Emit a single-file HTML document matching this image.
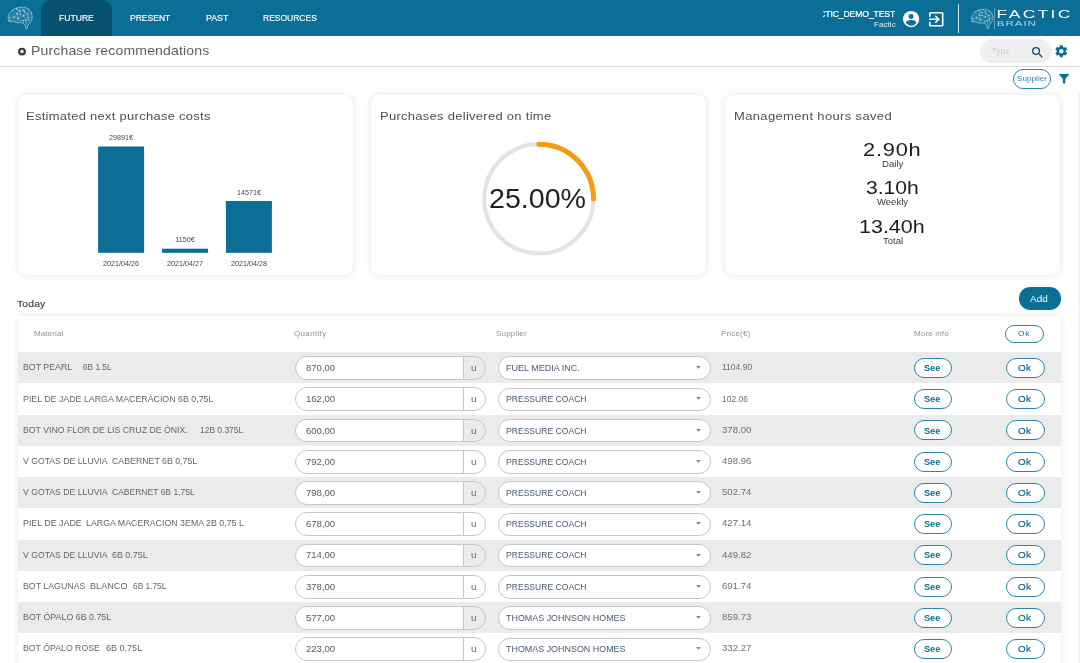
<!DOCTYPE html>
<html lang="en">
<head>
<meta charset="utf-8">
<title>Purchase recommendations</title>
<style>
*{box-sizing:border-box;margin:0;padding:0}
html,body{width:1080px;height:663px;overflow:hidden;background:#fff;font-family:"Liberation Sans",sans-serif}
#app{position:relative;width:1080px;height:663px;overflow:hidden;background:#fff;will-change:transform}
.abs{position:absolute}
.t{position:absolute;white-space:pre;transform-origin:0 50%;display:block}
#nav{position:absolute;left:0;top:0;width:1080px;height:36px;background:#0a6e96}
#tab{position:absolute;left:41px;top:0;width:71px;height:36px;background:#065070;border-radius:10px 10px 0 0}
#vdiv{position:absolute;left:957.7px;top:4px;width:1.2px;height:28.5px;background:rgba(255,255,255,.8)}
#titlebar{position:absolute;left:0;top:36px;width:1080px;height:31px;background:#fff;border-bottom:1.4px solid #dcdcdc}
#search{position:absolute;left:980px;top:39.2px;width:71.5px;height:23.8px;border-radius:12px;background:#eeeff0}
#ph{position:absolute;left:991.4px;top:45.4px;width:17.3px;height:12px;overflow:hidden;font-size:8.6px;letter-spacing:.2px;line-height:12px;color:#cfcfcf;white-space:pre}
#pill{position:absolute;left:1012.7px;top:69.4px;width:38.6px;height:19.6px;border-radius:10px;border:1.1px solid #2c84a8;background:#fff}
.card{position:absolute;top:95.3px;height:179.7px;width:335.4px;background:#fff;border-radius:8.5px;box-shadow:0 0 6px rgba(50,55,90,.14)}
#tbl{position:absolute;left:17.9px;top:315.8px;width:1043.2px;height:360px;background:#fff;box-shadow:0 0 6px rgba(60,60,80,.13)}
.row{position:absolute;left:17.9px;width:1043.2px;height:31.24px}
.inp{position:absolute;left:277.2px;top:4px;width:190.7px;height:23.7px;border:1px solid #c6c6c6;border-radius:12px;background:transparent;overflow:hidden}
.inp i{position:absolute;left:-1px;top:-1px;width:169.4px;height:23.7px;background:#fff;border:1px solid #c6c6c6;border-radius:12px 0 0 12px;display:block}
.sel{position:absolute;left:480.1px;top:4.2px;width:213.2px;height:23.5px;border:1px solid #c6c6c6;border-radius:12px;background:#fff}
.sel svg{left:197px;top:8.7px}
.btn{position:absolute;top:5.8px;height:20px;width:38.8px;border:1.1px solid #2c84a8;border-radius:10px;background:#fff}
.see{left:895.7px}.ok{left:987.9px}
#hok{position:absolute;left:1004.9px;top:325.1px;width:38.9px;height:17.9px;border:1.1px solid #2c84a8;border-radius:9px;background:#fff}
#add{position:absolute;left:1019.4px;top:287.2px;width:41.7px;height:22.6px;border-radius:11.3px;background:#0a6e96}
#acct{position:absolute;left:823px;top:7px;width:72px;height:14px;overflow:hidden;direction:rtl}
#rband{position:absolute;left:1077.6px;top:92px;width:2.4px;height:571px;background:#f1f2f4}
svg{position:absolute;overflow:visible}
.fl{font-family:"Liberation Sans",sans-serif}
</style>
</head>
<body>
<div id="app">
 <!-- tables & cards first (under) -->
 <div class="card" style="left:18px"></div>
 <div class="card" style="left:371px"></div>
 <div class="card" style="left:724.7px"></div>
 <div id="tbl"></div>
<div class="row" style="top:352.20px;background:#ebebeb"><div class="inp"><i></i></div><div class="sel"><svg width="4.9" height="2.7" viewBox="0 0 6 3.4"><path d="M0.5 0 H5.5 Q6.2 0 5.7 0.6 L3.4 3.1 Q3 3.5 2.6 3.1 L0.3 0.6 Q-0.2 0 0.5 0 Z" fill="#8a8a8a"/></svg></div><div class="btn see"></div><div class="btn ok"></div></div>
<div class="row" style="top:383.44px;background:#fff"><div class="inp"><i></i></div><div class="sel"><svg width="4.9" height="2.7" viewBox="0 0 6 3.4"><path d="M0.5 0 H5.5 Q6.2 0 5.7 0.6 L3.4 3.1 Q3 3.5 2.6 3.1 L0.3 0.6 Q-0.2 0 0.5 0 Z" fill="#8a8a8a"/></svg></div><div class="btn see"></div><div class="btn ok"></div></div>
<div class="row" style="top:414.68px;background:#ebebeb"><div class="inp"><i></i></div><div class="sel"><svg width="4.9" height="2.7" viewBox="0 0 6 3.4"><path d="M0.5 0 H5.5 Q6.2 0 5.7 0.6 L3.4 3.1 Q3 3.5 2.6 3.1 L0.3 0.6 Q-0.2 0 0.5 0 Z" fill="#8a8a8a"/></svg></div><div class="btn see"></div><div class="btn ok"></div></div>
<div class="row" style="top:445.92px;background:#fff"><div class="inp"><i></i></div><div class="sel"><svg width="4.9" height="2.7" viewBox="0 0 6 3.4"><path d="M0.5 0 H5.5 Q6.2 0 5.7 0.6 L3.4 3.1 Q3 3.5 2.6 3.1 L0.3 0.6 Q-0.2 0 0.5 0 Z" fill="#8a8a8a"/></svg></div><div class="btn see"></div><div class="btn ok"></div></div>
<div class="row" style="top:477.16px;background:#ebebeb"><div class="inp"><i></i></div><div class="sel"><svg width="4.9" height="2.7" viewBox="0 0 6 3.4"><path d="M0.5 0 H5.5 Q6.2 0 5.7 0.6 L3.4 3.1 Q3 3.5 2.6 3.1 L0.3 0.6 Q-0.2 0 0.5 0 Z" fill="#8a8a8a"/></svg></div><div class="btn see"></div><div class="btn ok"></div></div>
<div class="row" style="top:508.40px;background:#fff"><div class="inp"><i></i></div><div class="sel"><svg width="4.9" height="2.7" viewBox="0 0 6 3.4"><path d="M0.5 0 H5.5 Q6.2 0 5.7 0.6 L3.4 3.1 Q3 3.5 2.6 3.1 L0.3 0.6 Q-0.2 0 0.5 0 Z" fill="#8a8a8a"/></svg></div><div class="btn see"></div><div class="btn ok"></div></div>
<div class="row" style="top:539.64px;background:#ebebeb"><div class="inp"><i></i></div><div class="sel"><svg width="4.9" height="2.7" viewBox="0 0 6 3.4"><path d="M0.5 0 H5.5 Q6.2 0 5.7 0.6 L3.4 3.1 Q3 3.5 2.6 3.1 L0.3 0.6 Q-0.2 0 0.5 0 Z" fill="#8a8a8a"/></svg></div><div class="btn see"></div><div class="btn ok"></div></div>
<div class="row" style="top:570.88px;background:#fff"><div class="inp"><i></i></div><div class="sel"><svg width="4.9" height="2.7" viewBox="0 0 6 3.4"><path d="M0.5 0 H5.5 Q6.2 0 5.7 0.6 L3.4 3.1 Q3 3.5 2.6 3.1 L0.3 0.6 Q-0.2 0 0.5 0 Z" fill="#8a8a8a"/></svg></div><div class="btn see"></div><div class="btn ok"></div></div>
<div class="row" style="top:602.12px;background:#ebebeb"><div class="inp"><i></i></div><div class="sel"><svg width="4.9" height="2.7" viewBox="0 0 6 3.4"><path d="M0.5 0 H5.5 Q6.2 0 5.7 0.6 L3.4 3.1 Q3 3.5 2.6 3.1 L0.3 0.6 Q-0.2 0 0.5 0 Z" fill="#8a8a8a"/></svg></div><div class="btn see"></div><div class="btn ok"></div></div>
<div class="row" style="top:633.36px;background:#fff"><div class="inp"><i></i></div><div class="sel"><svg width="4.9" height="2.7" viewBox="0 0 6 3.4"><path d="M0.5 0 H5.5 Q6.2 0 5.7 0.6 L3.4 3.1 Q3 3.5 2.6 3.1 L0.3 0.6 Q-0.2 0 0.5 0 Z" fill="#8a8a8a"/></svg></div><div class="btn see"></div><div class="btn ok"></div></div>
 <div id="rband"></div>

 <div id="nav"></div>
 <div id="tab"></div>
 <div id="vdiv"></div>
 <div id="titlebar"></div>
 <svg style="left:17px;top:46px" width="10" height="11" viewBox="17 46 10 11"><circle cx="22" cy="51.6" r="2.85" fill="none" stroke="#3a3a3a" stroke-width="2.2"/></svg>
 <div id="search"></div>
 <div id="ph">Type...</div>
 <div id="pill"></div>
 <div id="hok"></div>
 <div id="add"></div>

 <!-- brain icon left -->
 <svg id="brainL" style="left:8px;top:6.8px" width="24.4" height="22.2" viewBox="0 0 24.4 22.2">
  <g id="brain" fill="none" stroke-linejoin="round" stroke-linecap="round">
   <path d="M0.6 13.8 L0.15 9.65 L1.35 6.3 L4.25 3.1 L8.1 1 L12.45 0.2 L17.3 0.35 L21.1 2.4 L23.55 5.8 L24.2 9.65 L23.55 13.5 L21.6 16.4 L19.7 18.3 L19.5 21.6 L18 22 L17.5 18.8 L15.35 16.4 L12.9 15.4 L9.6 15.9 L6.7 15 L3.8 14.5 Z" stroke="rgba(200,232,243,.58)" stroke-width=".9" fill="rgba(200,232,243,.10)"/>
   <path d="M1.35 6.3 L6.4 9.7 L4.25 3.1 L8.8 1.9 L9.3 6.8 M8.8 1.9 L12.45 0.2 L11.5 3.9 M12.45 0.2 L15.8 2.9 L17.3 0.35 M15.8 2.9 L21.1 2.4 M16.8 4.8 L15.6 8.9 L17.8 13 M12.4 7.2 L10 11.6 L6.7 15 M10 11.6 L12.9 15.4 L15.1 13.8 M6.4 9.7 L3.8 14.5 M1.8 13.5 L3.8 14.5 M0.15 9.65 L1.8 10.6 M23.55 13.5 L20.6 13 L21.6 16.4 M18.6 16.6 L19.7 18.3 M17.8 13 L17.5 18.8 M19.7 7.5 L17.8 13 M9.3 6.8 L10 11.6" stroke="rgba(200,232,243,.26)" stroke-width=".6"/>
   <path d="M8.8 1.9 L11.5 3.9 L15.8 2.9 L16.8 4.8 L11.5 3.9 L9.3 6.8 L6.4 9.7 L10 11.6 L15.6 8.9 L19.7 7.5 L20.4 10.6 L17.8 13 L15.1 13.8 L10 11.6 L9.3 6.8 L12.4 7.2 L15.6 8.9 L16.8 4.8 L19.7 7.5 M1.8 10.6 L6.4 9.7 L1.8 13.5 M4.25 3.1 L9.3 6.8 M20.4 10.6 L20.6 13 L17.8 13 L18.6 16.6 M12.4 7.2 L11.5 3.9 M6.4 9.7 L6.7 15 M10 11.6 L9.6 15.9 M15.1 13.8 L15.35 16.4 M21.1 2.4 L19.7 7.5 L23.55 5.8 M20.4 10.6 L24.2 9.65" stroke="rgba(200,232,243,.33)" stroke-width=".7"/>
   <g fill="rgba(225,244,250,.62)" stroke="none">
    <circle cx="8.8" cy="1.9" r=".8"/><circle cx="11.5" cy="3.9" r=".8"/><circle cx="15.8" cy="2.9" r=".7"/><circle cx="16.8" cy="4.8" r=".7"/>
    <circle cx="9.3" cy="6.8" r=".9"/><circle cx="6.4" cy="9.7" r=".8"/><circle cx="10" cy="11.6" r=".8"/><circle cx="15.6" cy="8.9" r=".9"/>
    <circle cx="19.7" cy="7.5" r=".8"/><circle cx="20.4" cy="10.6" r=".8"/><circle cx="17.8" cy="13" r=".7"/><circle cx="15.1" cy="13.8" r=".7"/>
    <circle cx="1.8" cy="10.6" r=".8"/><circle cx="1.8" cy="13.5" r=".8"/><circle cx="12.4" cy="7.2" r=".7"/><circle cx="20.6" cy="13" r=".6"/>
   </g>
  </g>
 </svg>
 <!-- brain icon right (logo) -->
 <svg style="left:970.5px;top:9px" width="22.2" height="20" viewBox="0 0 24.4 22.2"><use href="#brain"/></svg>
 <div class="abs" style="left:994px;top:7.8px;width:.8px;height:21px;background:rgba(255,255,255,.35)"></div>
 <!-- logo words -->
 <svg style="left:997px;top:8px" width="76" height="22" viewBox="0 0 76 22">
  <text class="fl" transform="translate(-0.4 10.05) scale(1.68 1)" font-size="10.4" fill="#fff" letter-spacing="1.4">FACTIC</text>
  <text class="fl" transform="translate(-0.2 18.2) scale(1.6 1)" font-size="7.3" fill="#a9d6e6" letter-spacing=".55">BRAIN</text>
 </svg>

 <!-- account text (clipped on the left like the original) -->
 <div id="acct"><span id="acctt" style="position:absolute;right:0;top:0;white-space:pre;font-size:8.7px;line-height:14px;color:#fff;direction:ltr;-webkit-text-stroke:.2px #fff;letter-spacing:-.16px;margin-right:-.16px">FACTIC_DEMO_TEST</span></div>

 <!-- account icon -->
 <svg style="left:902.8px;top:10.75px" width="16.2" height="16.2" viewBox="0 0 24 24">
  <circle cx="12" cy="12" r="12" fill="#fff"/>
  <circle cx="12" cy="8.2" r="3.7" fill="#0a6e96"/>
  <path d="M4.2 17.4 C5.6 14.4 8.6 13.5 12 13.5 C15.4 13.5 18.4 14.4 19.8 17.4 C18 20.3 15.2 21.8 12 21.8 C8.8 21.8 6 20.3 4.2 17.6 Z" fill="#0a6e96"/>
 </svg>
 <!-- exit icon -->
 <svg style="left:928.7px;top:11.6px" width="14.5" height="14.5" viewBox="0 0 18 18" fill="#fff">
  <path d="M7.09 12.59 L8.5 14 L13.5 9 L8.5 4 L7.09 5.41 L9.67 8 H0 v2 h9.67 Z M16 0 H2 C0.89 0 0 0.9 0 2 v4 h2 V2 h14 v14 H2 v-4 H0 v4 c0 1.1 0.89 2 2 2 h14 c1.1 0 2 -0.9 2 -2 V2 c0 -1.1 -0.9 -2 -2 -2 Z"/>
 </svg>
 <!-- search icon -->
 <svg style="left:1032.1px;top:46.5px" width="11.2" height="11.2" viewBox="3 3 18 18" fill="#0c4d66">
  <path d="M15.5 14h-.79l-.28-.27A6.471 6.471 0 0 0 16 9.5 6.5 6.5 0 1 0 9.500 16c1.610 0 3.090-.59 4.230-1.570l.27.28v.79l5 4.990L20.490 19l-4.990-5zm-6 0C7.010 14 5 11.990 5 9.500S7.010 5 9.500 5 14 7.010 14 9.500 11.990 14 9.500 14z"/>
 </svg>
 <!-- gear icon -->
 <svg style="left:1055.2px;top:45.3px" width="12.6" height="12.6" viewBox="2 2 20 20" fill="#0a6e96">
  <path d="M19.14 12.94c.04-.3.06-.61.06-.94 0-.32-.02-.64-.07-.94l2.030-1.580a.49.49 0 0 0 .12-.61l-1.920-3.320a.488.488 0 0 0-.59-.22l-2.390.96c-.5-.38-1.030-.7-1.620-.94l-.36-2.540a.484.484 0 0 0-.48-.41h-3.840c-.24 0-.43.17-.47.41l-.36 2.540c-.59.24-1.130.57-1.620.94l-2.390-.96c-.22-.08-.47 0-.59.22L2.740 8.870c-.12.21-.08.47.12.61l2.030 1.580c-.05.3-.09.63-.09.94s.02.640.07.940l-2.030 1.580a.49.49 0 0 0-.12.610l1.920 3.320c.12.220.37.290.59.220l2.390-.96c.5.380 1.030.7 1.620.94l.36 2.540c.05.240.240.410.480.410h3.840c.24 0 .44-.17.470-.410l.36-2.540c.59-.24 1.130-.56 1.620-.94l2.390.96c.22.080.47 0 .59-.22l1.920-3.320c.12-.22.070-.47-.12-.61l-2.010-1.580zM12 15.600c-1.980 0-3.600-1.620-3.600-3.600s1.620-3.600 3.600-3.600 3.600 1.620 3.600 3.600-1.620 3.600-3.600 3.600z"/>
 </svg>
 <!-- filter icon -->
 <svg style="left:1059px;top:74.4px" width="10.2" height="9.6" viewBox="0 0 10.2 9.6" fill="#0a6e96">
  <path d="M0.3 0 H9.9 C10.2 0 10.3 0.3 10.1 0.5 L6.3 4.9 V9 C6.3 9.4 6 9.6 5.7 9.6 H4.5 C4.2 9.6 3.9 9.4 3.9 9 V4.9 L0.1 0.5 C-0.1 0.3 0 0 0.3 0 Z"/>
 </svg>

 <!-- bar chart -->
 <svg style="left:0;top:0" width="360" height="280" viewBox="0 0 360 280">
  <rect x="98.1" y="146.5" width="46" height="106.3" fill="#0a6e96"/>
  <rect x="162" y="248.7" width="46" height="4.1" fill="#0a6e96"/>
  <rect x="225.9" y="201" width="46" height="51.8" fill="#0a6e96"/>
  <g class="fl" font-size="7.2" fill="#484848" text-anchor="middle">
   <text x="121.1" y="139.7">29891€</text>
   <text x="185" y="242.1">1150€</text>
   <text x="249" y="194.6">14571€</text>
   <text x="121.1" y="265.5">2021/04/26</text>
   <text x="185" y="265.5">2021/04/27</text>
   <text x="249" y="265.5">2021/04/28</text>
  </g>
 </svg>
 <!-- donut -->
 <svg style="left:478px;top:138px" width="122" height="122" viewBox="478 138 122 122">
  <circle cx="538.9" cy="198.8" r="54.6" fill="none" stroke="#e3e3e3" stroke-width="4.2"/>
  <path d="M538.9 144.2 A54.6 54.6 0 0 1 593.5 198.8" fill="none" stroke="#f89a0f" stroke-width="5" stroke-linecap="round"/>
 </svg>

<span class="t" style="left:59.17px;top:11.54px;font-size:8.8px;line-height:12.32px;color:#fff;letter-spacing:0.000px;transform:scaleX(0.9764);-webkit-text-stroke:0.15px #fff;">FUTURE</span>
<span class="t" style="left:130.17px;top:11.54px;font-size:8.8px;line-height:12.32px;color:#fff;letter-spacing:0.000px;transform:scaleX(0.9707);-webkit-text-stroke:0.15px #fff;">PRESENT</span>
<span class="t" style="left:205.97px;top:11.54px;font-size:8.8px;line-height:12.32px;color:#fff;letter-spacing:0.000px;transform:scaleX(1.0007);-webkit-text-stroke:0.15px #fff;">PAST</span>
<span class="t" style="left:263.47px;top:11.54px;font-size:8.8px;line-height:12.32px;color:#fff;letter-spacing:0.000px;transform:scaleX(0.9661);-webkit-text-stroke:0.15px #fff;">RESOURCES</span>
<span class="t" style="left:873.56px;top:19.71px;font-size:7.4px;line-height:10.36px;color:rgba(255,255,255,.9);letter-spacing:0.004px;transform:scaleX(1.1000);">Factic</span>
<span class="t" style="left:31.23px;top:41.99px;font-size:12.8px;line-height:17.92px;color:#5e5e5e;letter-spacing:0.117px;transform:scaleX(1.1000);">Purchase recommendations</span>
<span class="t" style="left:1017.04px;top:74.07px;font-size:7.6px;line-height:10.64px;color:#2f86aa;letter-spacing:0.000px;transform:scaleX(1.0773);">Supplier</span>
<span class="t" style="left:26.09px;top:107.78px;font-size:11.8px;line-height:16.52px;color:#505050;letter-spacing:0.250px;transform:scaleX(1.1000);">Estimated next purchase costs</span>
<span class="t" style="left:379.99px;top:107.78px;font-size:11.8px;line-height:16.52px;color:#505050;letter-spacing:0.258px;transform:scaleX(1.1000);">Purchases delivered on time</span>
<span class="t" style="left:733.79px;top:107.78px;font-size:11.8px;line-height:16.52px;color:#505050;letter-spacing:0.328px;transform:scaleX(1.1000);">Management hours saved</span>
<span class="t" style="left:488.98px;top:180.51px;font-size:27px;line-height:37.8px;color:#222;letter-spacing:-0.000px;transform:scaleX(1.0591);">25.00%</span>
<span class="t" style="left:863.16px;top:137.77px;font-size:18.2px;line-height:25.48px;color:#1c1c1c;letter-spacing:0.652px;transform:scaleX(1.2000);">2.90h</span>
<span class="t" style="left:865.66px;top:176.37px;font-size:18.2px;line-height:25.48px;color:#1c1c1c;letter-spacing:0.000px;transform:scaleX(1.1589);">3.10h</span>
<span class="t" style="left:859.16px;top:215.07px;font-size:18.2px;line-height:25.48px;color:#1c1c1c;letter-spacing:0.000px;transform:scaleX(1.1816);">13.40h</span>
<span class="t" style="left:881.96px;top:157.90px;font-size:9px;line-height:12.6px;color:#3a3a3a;letter-spacing:0.000px;transform:scaleX(1.0674);">Daily</span>
<span class="t" style="left:877.06px;top:196.20px;font-size:9px;line-height:12.6px;color:#3a3a3a;letter-spacing:0.000px;transform:scaleX(1.0586);">Weekly</span>
<span class="t" style="left:882.76px;top:235.40px;font-size:9px;line-height:12.6px;color:#3a3a3a;letter-spacing:0.000px;transform:scaleX(1.0551);">Total</span>
<span class="t" style="left:16.93px;top:297.06px;font-size:9.5px;line-height:13.3px;color:#3a3a3a;letter-spacing:0.095px;transform:scaleX(1.1000);-webkit-text-stroke:0.1px #3a3a3a;">Today</span>
<span class="t" style="left:1030.46px;top:293.10px;font-size:9px;line-height:12.6px;color:#fff;letter-spacing:0.112px;transform:scaleX(1.1000);">Add</span>
<span class="t" style="left:33.96px;top:328.67px;font-size:7.3px;line-height:10.22px;color:#939393;letter-spacing:0.098px;transform:scaleX(1.1000);">Material</span>
<span class="t" style="left:294.06px;top:328.67px;font-size:7.3px;line-height:10.22px;color:#939393;letter-spacing:0.298px;transform:scaleX(1.1000);">Quantity</span>
<span class="t" style="left:496.06px;top:328.67px;font-size:7.3px;line-height:10.22px;color:#939393;letter-spacing:0.161px;transform:scaleX(1.1000);">Supplier</span>
<span class="t" style="left:721.06px;top:328.67px;font-size:7.3px;line-height:10.22px;color:#939393;letter-spacing:0.143px;transform:scaleX(1.1000);">Price(€)</span>
<span class="t" style="left:914.36px;top:328.67px;font-size:7.3px;line-height:10.22px;color:#939393;letter-spacing:0.141px;transform:scaleX(1.1000);">More info</span>
<span class="t" style="left:1018.44px;top:328.67px;font-size:7.6px;line-height:10.64px;color:#0a6e96;letter-spacing:0.763px;transform:scaleX(1.1000);">Ok</span>
<span class="t" style="left:23.16px;top:361.35px;font-size:9px;line-height:12.6px;color:#666;letter-spacing:0.000px;transform:scaleX(0.9763);">BOT PEARL</span>
<span class="t" style="left:82.76px;top:361.35px;font-size:9px;line-height:12.6px;color:#666;letter-spacing:0.000px;transform:scaleX(0.9205);">6B 1.5L</span>
<span class="t" style="left:306.26px;top:362.25px;font-size:9px;line-height:12.6px;color:#5c5c5c;letter-spacing:0.000px;transform:scaleX(1.0593);">870,00</span>
<span class="t" style="left:471.46px;top:362.25px;font-size:9px;line-height:12.6px;color:#666;letter-spacing:0.000px;transform:scaleX(1.1000);">u</span>
<span class="t" style="left:506.06px;top:362.15px;font-size:9px;line-height:12.6px;color:#4a5a70;letter-spacing:0.000px;transform:scaleX(0.9997);">FUEL MEDIA INC.</span>
<span class="t" style="left:722.46px;top:361.35px;font-size:9px;line-height:12.6px;color:#707070;letter-spacing:-0.000px;transform:scaleX(0.9495);">1104.90</span>
<span class="t" style="left:924.26px;top:362.25px;font-size:9px;line-height:12.6px;color:#0a6e96;letter-spacing:0.000px;transform:scaleX(1.0155);font-weight:700;">See</span>
<span class="t" style="left:1017.96px;top:362.25px;font-size:9px;line-height:12.6px;color:#0a6e96;letter-spacing:0.179px;transform:scaleX(1.1000);-webkit-text-stroke:0.2px #0a6e96;">Ok</span>
<span class="t" style="left:23.16px;top:392.55px;font-size:9px;line-height:12.6px;color:#666;letter-spacing:0.000px;transform:scaleX(0.9800);">PIEL DE JADE LARGA MACERACION 6B 0,75L</span>
<span class="t" style="left:306.26px;top:393.45px;font-size:9px;line-height:12.6px;color:#5c5c5c;letter-spacing:0.000px;transform:scaleX(1.0593);">162,00</span>
<span class="t" style="left:471.46px;top:393.45px;font-size:9px;line-height:12.6px;color:#666;letter-spacing:0.000px;transform:scaleX(1.1000);">u</span>
<span class="t" style="left:506.06px;top:393.35px;font-size:9px;line-height:12.6px;color:#4a5a70;letter-spacing:0.000px;transform:scaleX(0.9532);">PRESSURE COACH</span>
<span class="t" style="left:722.46px;top:392.55px;font-size:9px;line-height:12.6px;color:#707070;letter-spacing:0.000px;transform:scaleX(0.9394);">102.06</span>
<span class="t" style="left:924.26px;top:393.45px;font-size:9px;line-height:12.6px;color:#0a6e96;letter-spacing:0.000px;transform:scaleX(1.0155);font-weight:700;">See</span>
<span class="t" style="left:1017.96px;top:393.45px;font-size:9px;line-height:12.6px;color:#0a6e96;letter-spacing:0.179px;transform:scaleX(1.1000);-webkit-text-stroke:0.2px #0a6e96;">Ok</span>
<span class="t" style="left:23.16px;top:423.75px;font-size:9px;line-height:12.6px;color:#666;letter-spacing:0.000px;transform:scaleX(0.9699);">BOT VINO FLOR DE LIS CRUZ DE ÓNIX.</span>
<span class="t" style="left:200.46px;top:423.75px;font-size:9px;line-height:12.6px;color:#666;letter-spacing:0.000px;transform:scaleX(0.9374);">12B 0.375L</span>
<span class="t" style="left:306.26px;top:424.65px;font-size:9px;line-height:12.6px;color:#5c5c5c;letter-spacing:0.000px;transform:scaleX(1.0593);">600,00</span>
<span class="t" style="left:471.46px;top:424.65px;font-size:9px;line-height:12.6px;color:#666;letter-spacing:0.000px;transform:scaleX(1.1000);">u</span>
<span class="t" style="left:506.06px;top:424.55px;font-size:9px;line-height:12.6px;color:#4a5a70;letter-spacing:0.000px;transform:scaleX(0.9532);">PRESSURE COACH</span>
<span class="t" style="left:722.46px;top:423.75px;font-size:9px;line-height:12.6px;color:#707070;letter-spacing:0.000px;transform:scaleX(1.0666);">378.00</span>
<span class="t" style="left:924.26px;top:424.65px;font-size:9px;line-height:12.6px;color:#0a6e96;letter-spacing:0.000px;transform:scaleX(1.0155);font-weight:700;">See</span>
<span class="t" style="left:1017.96px;top:424.65px;font-size:9px;line-height:12.6px;color:#0a6e96;letter-spacing:0.179px;transform:scaleX(1.1000);-webkit-text-stroke:0.2px #0a6e96;">Ok</span>
<span class="t" style="left:23.16px;top:454.95px;font-size:9px;line-height:12.6px;color:#666;letter-spacing:0.000px;transform:scaleX(0.9635);">V GOTAS DE LLUVIA</span>
<span class="t" style="left:112.16px;top:454.95px;font-size:9px;line-height:12.6px;color:#666;letter-spacing:0.000px;transform:scaleX(0.9745);">CABERNET 6B 0,75L</span>
<span class="t" style="left:306.26px;top:455.85px;font-size:9px;line-height:12.6px;color:#5c5c5c;letter-spacing:0.000px;transform:scaleX(1.0593);">792,00</span>
<span class="t" style="left:471.46px;top:455.85px;font-size:9px;line-height:12.6px;color:#666;letter-spacing:0.000px;transform:scaleX(1.1000);">u</span>
<span class="t" style="left:506.06px;top:455.75px;font-size:9px;line-height:12.6px;color:#4a5a70;letter-spacing:0.000px;transform:scaleX(0.9532);">PRESSURE COACH</span>
<span class="t" style="left:722.46px;top:454.95px;font-size:9px;line-height:12.6px;color:#707070;letter-spacing:0.000px;transform:scaleX(1.0666);">498.96</span>
<span class="t" style="left:924.26px;top:455.85px;font-size:9px;line-height:12.6px;color:#0a6e96;letter-spacing:0.000px;transform:scaleX(1.0155);font-weight:700;">See</span>
<span class="t" style="left:1017.96px;top:455.85px;font-size:9px;line-height:12.6px;color:#0a6e96;letter-spacing:0.179px;transform:scaleX(1.1000);-webkit-text-stroke:0.2px #0a6e96;">Ok</span>
<span class="t" style="left:23.16px;top:486.15px;font-size:9px;line-height:12.6px;color:#666;letter-spacing:0.000px;transform:scaleX(0.9635);">V GOTAS DE LLUVIA</span>
<span class="t" style="left:112.16px;top:486.15px;font-size:9px;line-height:12.6px;color:#666;letter-spacing:0.000px;transform:scaleX(0.9471);">CABERNET 6B 1,75L</span>
<span class="t" style="left:306.26px;top:487.05px;font-size:9px;line-height:12.6px;color:#5c5c5c;letter-spacing:0.000px;transform:scaleX(1.0593);">798,00</span>
<span class="t" style="left:471.46px;top:487.05px;font-size:9px;line-height:12.6px;color:#666;letter-spacing:0.000px;transform:scaleX(1.1000);">u</span>
<span class="t" style="left:506.06px;top:486.95px;font-size:9px;line-height:12.6px;color:#4a5a70;letter-spacing:0.000px;transform:scaleX(0.9532);">PRESSURE COACH</span>
<span class="t" style="left:722.46px;top:486.15px;font-size:9px;line-height:12.6px;color:#707070;letter-spacing:0.000px;transform:scaleX(1.0666);">502.74</span>
<span class="t" style="left:924.26px;top:487.05px;font-size:9px;line-height:12.6px;color:#0a6e96;letter-spacing:0.000px;transform:scaleX(1.0155);font-weight:700;">See</span>
<span class="t" style="left:1017.96px;top:487.05px;font-size:9px;line-height:12.6px;color:#0a6e96;letter-spacing:0.179px;transform:scaleX(1.1000);-webkit-text-stroke:0.2px #0a6e96;">Ok</span>
<span class="t" style="left:23.16px;top:517.35px;font-size:9px;line-height:12.6px;color:#666;letter-spacing:0.000px;transform:scaleX(0.9845);">PIEL DE JADE</span>
<span class="t" style="left:86.26px;top:517.35px;font-size:9px;line-height:12.6px;color:#666;letter-spacing:0.000px;transform:scaleX(0.9800);">LARGA MACERACION 3EMA 2B 0,75 L</span>
<span class="t" style="left:306.26px;top:518.25px;font-size:9px;line-height:12.6px;color:#5c5c5c;letter-spacing:0.000px;transform:scaleX(1.0593);">678,00</span>
<span class="t" style="left:471.46px;top:518.25px;font-size:9px;line-height:12.6px;color:#666;letter-spacing:0.000px;transform:scaleX(1.1000);">u</span>
<span class="t" style="left:506.06px;top:518.15px;font-size:9px;line-height:12.6px;color:#4a5a70;letter-spacing:0.000px;transform:scaleX(0.9532);">PRESSURE COACH</span>
<span class="t" style="left:722.46px;top:517.35px;font-size:9px;line-height:12.6px;color:#707070;letter-spacing:0.000px;transform:scaleX(1.0666);">427.14</span>
<span class="t" style="left:924.26px;top:518.25px;font-size:9px;line-height:12.6px;color:#0a6e96;letter-spacing:0.000px;transform:scaleX(1.0155);font-weight:700;">See</span>
<span class="t" style="left:1017.96px;top:518.25px;font-size:9px;line-height:12.6px;color:#0a6e96;letter-spacing:0.179px;transform:scaleX(1.1000);-webkit-text-stroke:0.2px #0a6e96;">Ok</span>
<span class="t" style="left:23.16px;top:548.55px;font-size:9px;line-height:12.6px;color:#666;letter-spacing:0.000px;transform:scaleX(0.9635);">V GOTAS DE LLUVIA</span>
<span class="t" style="left:112.16px;top:548.55px;font-size:9px;line-height:12.6px;color:#666;letter-spacing:0.000px;transform:scaleX(0.9898);">6B 0.75L</span>
<span class="t" style="left:306.26px;top:549.45px;font-size:9px;line-height:12.6px;color:#5c5c5c;letter-spacing:0.000px;transform:scaleX(1.0593);">714,00</span>
<span class="t" style="left:471.46px;top:549.45px;font-size:9px;line-height:12.6px;color:#666;letter-spacing:0.000px;transform:scaleX(1.1000);">u</span>
<span class="t" style="left:506.06px;top:549.35px;font-size:9px;line-height:12.6px;color:#4a5a70;letter-spacing:0.000px;transform:scaleX(0.9532);">PRESSURE COACH</span>
<span class="t" style="left:722.46px;top:548.55px;font-size:9px;line-height:12.6px;color:#707070;letter-spacing:0.000px;transform:scaleX(1.0666);">449.82</span>
<span class="t" style="left:924.26px;top:549.45px;font-size:9px;line-height:12.6px;color:#0a6e96;letter-spacing:0.000px;transform:scaleX(1.0155);font-weight:700;">See</span>
<span class="t" style="left:1017.96px;top:549.45px;font-size:9px;line-height:12.6px;color:#0a6e96;letter-spacing:0.179px;transform:scaleX(1.1000);-webkit-text-stroke:0.2px #0a6e96;">Ok</span>
<span class="t" style="left:23.16px;top:579.75px;font-size:9px;line-height:12.6px;color:#666;letter-spacing:0.000px;transform:scaleX(0.9766);">BOT LAGUNAS</span>
<span class="t" style="left:89.76px;top:579.75px;font-size:9px;line-height:12.6px;color:#666;letter-spacing:0.000px;transform:scaleX(1.0148);">BLANCO</span>
<span class="t" style="left:133.36px;top:579.75px;font-size:9px;line-height:12.6px;color:#666;letter-spacing:0.000px;transform:scaleX(0.9260);">6B 1.75L</span>
<span class="t" style="left:306.26px;top:580.65px;font-size:9px;line-height:12.6px;color:#5c5c5c;letter-spacing:0.000px;transform:scaleX(1.0593);">378,00</span>
<span class="t" style="left:471.46px;top:580.65px;font-size:9px;line-height:12.6px;color:#666;letter-spacing:0.000px;transform:scaleX(1.1000);">u</span>
<span class="t" style="left:506.06px;top:580.55px;font-size:9px;line-height:12.6px;color:#4a5a70;letter-spacing:0.000px;transform:scaleX(0.9532);">PRESSURE COACH</span>
<span class="t" style="left:722.46px;top:579.75px;font-size:9px;line-height:12.6px;color:#707070;letter-spacing:0.000px;transform:scaleX(1.0666);">691.74</span>
<span class="t" style="left:924.26px;top:580.65px;font-size:9px;line-height:12.6px;color:#0a6e96;letter-spacing:0.000px;transform:scaleX(1.0155);font-weight:700;">See</span>
<span class="t" style="left:1017.96px;top:580.65px;font-size:9px;line-height:12.6px;color:#0a6e96;letter-spacing:0.179px;transform:scaleX(1.1000);-webkit-text-stroke:0.2px #0a6e96;">Ok</span>
<span class="t" style="left:23.16px;top:610.95px;font-size:9px;line-height:12.6px;color:#666;letter-spacing:0.000px;transform:scaleX(0.9827);">BOT ÓPALO 6B 0.75L</span>
<span class="t" style="left:306.26px;top:611.85px;font-size:9px;line-height:12.6px;color:#5c5c5c;letter-spacing:0.000px;transform:scaleX(1.0593);">577,00</span>
<span class="t" style="left:471.46px;top:611.85px;font-size:9px;line-height:12.6px;color:#666;letter-spacing:0.000px;transform:scaleX(1.1000);">u</span>
<span class="t" style="left:506.06px;top:611.75px;font-size:9px;line-height:12.6px;color:#4a5a70;letter-spacing:0.000px;transform:scaleX(0.9913);">THOMAS JOHNSON HOMES</span>
<span class="t" style="left:722.46px;top:610.95px;font-size:9px;line-height:12.6px;color:#707070;letter-spacing:0.000px;transform:scaleX(1.0666);">859.73</span>
<span class="t" style="left:924.26px;top:611.85px;font-size:9px;line-height:12.6px;color:#0a6e96;letter-spacing:0.000px;transform:scaleX(1.0155);font-weight:700;">See</span>
<span class="t" style="left:1017.96px;top:611.85px;font-size:9px;line-height:12.6px;color:#0a6e96;letter-spacing:0.179px;transform:scaleX(1.1000);-webkit-text-stroke:0.2px #0a6e96;">Ok</span>
<span class="t" style="left:23.16px;top:642.15px;font-size:9px;line-height:12.6px;color:#666;letter-spacing:0.000px;transform:scaleX(0.9705);">BOT ÓPALO ROSE</span>
<span class="t" style="left:106.26px;top:642.15px;font-size:9px;line-height:12.6px;color:#666;letter-spacing:0.000px;transform:scaleX(1.0037);">6B 0,75L</span>
<span class="t" style="left:306.26px;top:643.05px;font-size:9px;line-height:12.6px;color:#5c5c5c;letter-spacing:0.000px;transform:scaleX(1.0593);">223,00</span>
<span class="t" style="left:471.46px;top:643.05px;font-size:9px;line-height:12.6px;color:#666;letter-spacing:0.000px;transform:scaleX(1.1000);">u</span>
<span class="t" style="left:506.06px;top:642.95px;font-size:9px;line-height:12.6px;color:#4a5a70;letter-spacing:0.000px;transform:scaleX(0.9913);">THOMAS JOHNSON HOMES</span>
<span class="t" style="left:722.46px;top:642.15px;font-size:9px;line-height:12.6px;color:#707070;letter-spacing:0.000px;transform:scaleX(1.0666);">332.27</span>
<span class="t" style="left:924.26px;top:643.05px;font-size:9px;line-height:12.6px;color:#0a6e96;letter-spacing:0.000px;transform:scaleX(1.0155);font-weight:700;">See</span>
<span class="t" style="left:1017.96px;top:643.05px;font-size:9px;line-height:12.6px;color:#0a6e96;letter-spacing:0.179px;transform:scaleX(1.1000);-webkit-text-stroke:0.2px #0a6e96;">Ok</span>
</div>
</body>
</html>
